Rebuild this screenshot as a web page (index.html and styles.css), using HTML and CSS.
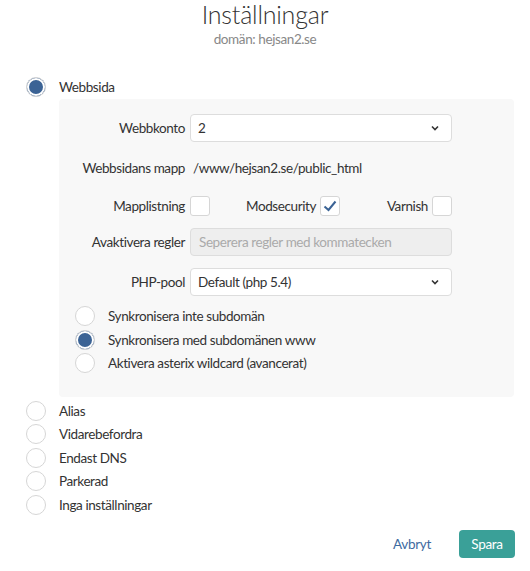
FILE: index.html
```html
<!DOCTYPE html>
<html lang="sv">
<head>
<meta charset="utf-8">
<title>Inställningar</title>
<link rel="stylesheet" href="styles.css">
</head>
<body>
<div class="dialog">
  <header class="head">
    <h1 class="title">Inställningar</h1>
    <div class="subtitle">domän: hejsan2.se</div>
  </header>

  <div class="options">
    <div class="opt">
      <span class="radio checked"></span>
      <span class="opt-label">Webbsida</span>
    </div>

    <div class="panel">
      <div class="row row-a">
        <label class="lbl">Webbkonto</label>
        <div class="select">
          <span>2</span>
          <svg class="chev" width="8" height="6" viewBox="0 0 8 6"><path d="M1 1.5 L4 4.5 L7 1.5" fill="none" stroke="#333" stroke-width="1.6"/></svg>
        </div>
      </div>

      <div class="row row-b">
        <label class="lbl">Webbsidans mapp</label>
        <div class="static">/www/hejsan2.se/public_html</div>
      </div>

      <div class="row row-c">
        <label class="lbl">Mapplistning</label>
        <div class="checks">
          <span class="box"></span>
          <div class="chk-group"><span class="chk-label">Modsecurity</span><span class="box"><svg width="18" height="18" viewBox="0 0 18 18"><path d="M3.5 9.5 L7.5 13 L14.5 4.5" fill="none" stroke="#3b6395" stroke-width="2"/></svg></span></div>
          <div class="chk-group"><span class="chk-label">Varnish</span><span class="box"></span></div>
        </div>
      </div>

      <div class="row row-d">
        <label class="lbl">Avaktivera regler</label>
        <div class="input disabled">Seperera regler med kommatecken</div>
      </div>

      <div class="row row-e">
        <label class="lbl">PHP-pool</label>
        <div class="select">
          <span>Default (php 5.4)</span>
          <svg class="chev" width="8" height="6" viewBox="0 0 8 6"><path d="M1 1.5 L4 4.5 L7 1.5" fill="none" stroke="#333" stroke-width="1.6"/></svg>
        </div>
      </div>

      <div class="subopts">
        <div class="opt sub"><span class="radio"></span><span class="opt-label">Synkronisera inte subdomän</span></div>
        <div class="opt sub"><span class="radio checked"></span><span class="opt-label">Synkronisera med subdomänen www</span></div>
        <div class="opt sub"><span class="radio"></span><span class="opt-label">Aktivera asterix wildcard (avancerat)</span></div>
      </div>
    </div>

    <div class="rest">
      <div class="opt"><span class="radio"></span><span class="opt-label">Alias</span></div>
      <div class="opt"><span class="radio"></span><span class="opt-label">Vidarebefordra</span></div>
      <div class="opt"><span class="radio"></span><span class="opt-label">Endast DNS</span></div>
      <div class="opt"><span class="radio"></span><span class="opt-label">Parkerad</span></div>
      <div class="opt"><span class="radio"></span><span class="opt-label">Inga inställningar</span></div>
    </div>
  </div>

  <footer class="foot">
    <button class="btn link">Avbryt</button>
    <button class="btn primary">Spara</button>
  </footer>
</div>
</body>
</html>
```

FILE: styles.css
```css
* { box-sizing: border-box; }

html, body {
  margin: 0;
  padding: 0;
  background: #fff;
}

body {
  font-family: Lato, "Open Sans", sans-serif;
  font-size: 13.5px;
  letter-spacing: -0.4px;
  color: #333;
  width: 530px;
}

.head {
  text-align: center;
}

.title {
  margin: 0;
  font-size: 25px;
  font-weight: 300;
  letter-spacing: -0.2px;
  line-height: 29px;
  color: #333;
}

.subtitle {
  font-size: 13.5px;
  line-height: 20px;
  color: #888;
}

.options {
  padding: 26px 0 0 26px;
}

.opt {
  display: flex;
  align-items: center;
  height: 23.5px;
}

.opt-label {
  margin-left: 13px;
  line-height: 18px;
}

.radio {
  width: 20px;
  height: 20px;
  flex: none;
  border-radius: 50%;
  border: 1px solid #d6d6d6;
  background: #fff;
}

.radio.checked {
  background: #3b6395;
  box-shadow: inset 0 0 0 2px #fff;
}

.panel {
  margin: 0 16px 0 33px;
  background: #f8f8f8;
  border-radius: 4px;
  padding: 15px 0 22px 0;
}

.row {
  display: grid;
  grid-template-columns: 126px 262px;
  column-gap: 5px;
  align-items: center;
  height: 28px;
}

.row-a { margin-bottom: 12px; }
.row-b { margin-bottom: 10px; }
.row-c { margin-bottom: 8px; }
.row-d { margin-bottom: 12px; }
.row-e { margin-bottom: 9px; }

.lbl {
  text-align: right;
  white-space: nowrap;
}

.static {
  padding-left: 3px;
}

.select, .input {
  height: 28px;
  border: 1px solid #ddd;
  border-radius: 4px;
  background: #fff;
  display: flex;
  align-items: center;
  justify-content: space-between;
  padding: 0 12px 0 7px;
}

.input.disabled {
  background: #eee;
  color: #aaa;
  padding-left: 8px;
}

.chev {
  display: block;
}

.checks {
  display: grid;
  grid-template-columns: 20px 130px 112px;
  align-items: center;
}

.chk-group {
  display: flex;
  justify-content: flex-end;
  align-items: center;
}

.chk-label {
  margin-right: 4px;
}

.box {
  width: 20px;
  height: 20px;
  border: 1px solid #d6d6d6;
  border-radius: 3px;
  background: #fff;
  display: flex;
  align-items: center;
  justify-content: center;
}

.box svg { display: block; }

.subopts {
  padding-left: 16px;
}

.rest {
  margin-top: 2px;
}

.foot {
  display: flex;
  justify-content: flex-end;
  align-items: center;
  gap: 16px;
  padding: 13px 15px 0 0;
}

.btn {
  font-family: inherit;
  font-size: 13.5px;
  letter-spacing: -0.3px;
  height: 28px;
  border-radius: 4px;
  border: none;
  padding: 0 12px;
  cursor: pointer;
}

.btn.link {
  background: transparent;
  color: #3e6aa0;
}

.btn.primary {
  width: 56px;
  padding: 0;
  background: #3aa098;
  color: #fff;
}
```
